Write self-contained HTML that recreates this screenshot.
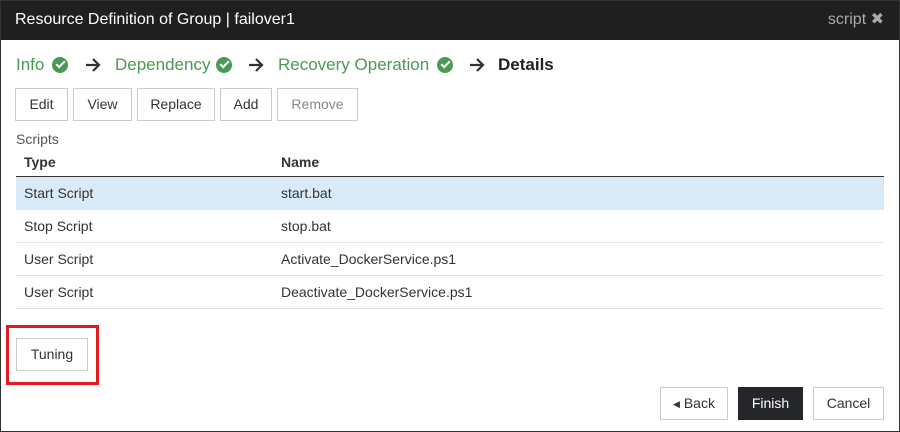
<!DOCTYPE html><html><head><style>
*{box-sizing:border-box;margin:0;padding:0}
body{width:900px;height:432px;overflow:hidden;font-family:"Liberation Sans",sans-serif;font-size:14px;color:#333;background:#fff;position:relative}
.frame{position:absolute;left:0;top:0;width:900px;height:432px;border:1px solid #333}
.title{position:absolute;left:0;top:0;width:900px;height:40px;background:#1f1f1f;color:#fff;font-size:16px;line-height:40px;padding-left:15px}
.title .r{position:absolute;right:16px;top:0;color:#aaa;font-size:16px}
.st{position:absolute;top:55px;font-size:17px;color:#4a9a55;white-space:nowrap;line-height:20px}
.chk{position:absolute;top:57px;width:16px;height:16px;border-radius:50%;background:#4a9a55}
.chk:after{content:"";position:absolute;left:4px;top:4px;width:7px;height:3px;border-left:2.5px solid #fff;border-bottom:2.5px solid #fff;transform:rotate(-45deg)}
.arr{position:absolute;top:57px}
.btn{position:absolute;height:33px;border:1px solid #ccc;background:#fff;text-align:center;line-height:31px;font-size:14px;color:#333}
.lbl{position:absolute;left:16px;top:131px;color:#555;font-size:14px}
.th{position:absolute;left:16px;top:150px;width:868px;height:27px;border-bottom:1px solid #333;font-weight:bold;font-size:14px}
.row{position:absolute;left:16px;width:868px;height:33px;border-bottom:1px solid #e5e5e5;font-size:14px;line-height:32px}
.c1{position:absolute;left:8px}.c2{position:absolute;left:265px}
.th .c1,.th .c2{top:4px}
</style></head><body>
<div class="title">Resource Definition of Group | failover1<span class="r">script ✖</span></div>
<div class="st" style="left:16px">Info</div><div class="chk" style="left:52px"></div>
<svg class="arr" style="left:85px" width="16" height="16" viewBox="0 0 16 16"><path d="M1 8H14M8 2L14 8L8 14" stroke="#333" stroke-width="2.2" fill="none"/></svg>
<div class="st" style="left:115px">Dependency</div><div class="chk" style="left:216px"></div>
<svg class="arr" style="left:248px" width="16" height="16" viewBox="0 0 16 16"><path d="M1 8H14M8 2L14 8L8 14" stroke="#333" stroke-width="2.2" fill="none"/></svg>
<div class="st" style="left:278px">Recovery Operation</div><div class="chk" style="left:437px"></div>
<svg class="arr" style="left:469px" width="16" height="16" viewBox="0 0 16 16"><path d="M1 8H14M8 2L14 8L8 14" stroke="#333" stroke-width="2.2" fill="none"/></svg>
<div class="st" style="left:498px;color:#222;font-weight:bold">Details</div>
<div class="btn" style="left:15px;top:88px;width:53px">Edit</div>
<div class="btn" style="left:73px;top:88px;width:59px">View</div>
<div class="btn" style="left:137px;top:88px;width:78px">Replace</div>
<div class="btn" style="left:220px;top:88px;width:52px">Add</div>
<div class="btn" style="left:277px;top:88px;width:81px;color:#888">Remove</div>
<div class="lbl">Scripts</div>
<div class="th"><span class="c1">Type</span><span class="c2">Name</span></div>
<div class="row" style="top:177px;background:#d9ebf9"><span class="c1">Start Script</span><span class="c2">start.bat</span></div>
<div class="row" style="top:210px"><span class="c1">Stop Script</span><span class="c2">stop.bat</span></div>
<div class="row" style="top:243px"><span class="c1">User Script</span><span class="c2">Activate_DockerService.ps1</span></div>
<div class="row" style="top:276px"><span class="c1">User Script</span><span class="c2">Deactivate_DockerService.ps1</span></div>
<div style="position:absolute;left:6px;top:325px;width:93px;height:60px;border:3px solid #e21b23"></div>
<div class="btn" style="left:16px;top:338px;width:72px">Tuning</div>
<div class="btn" style="left:660px;top:387px;width:68px"><span style="font-size:9px;vertical-align:1px">◀</span> Back</div>
<div class="btn" style="left:738px;top:387px;width:65px;background:#24262b;border-color:#24262b;color:#fff">Finish</div>
<div class="btn" style="left:813px;top:387px;width:71px">Cancel</div>
<div class="frame"></div>
</body></html>
